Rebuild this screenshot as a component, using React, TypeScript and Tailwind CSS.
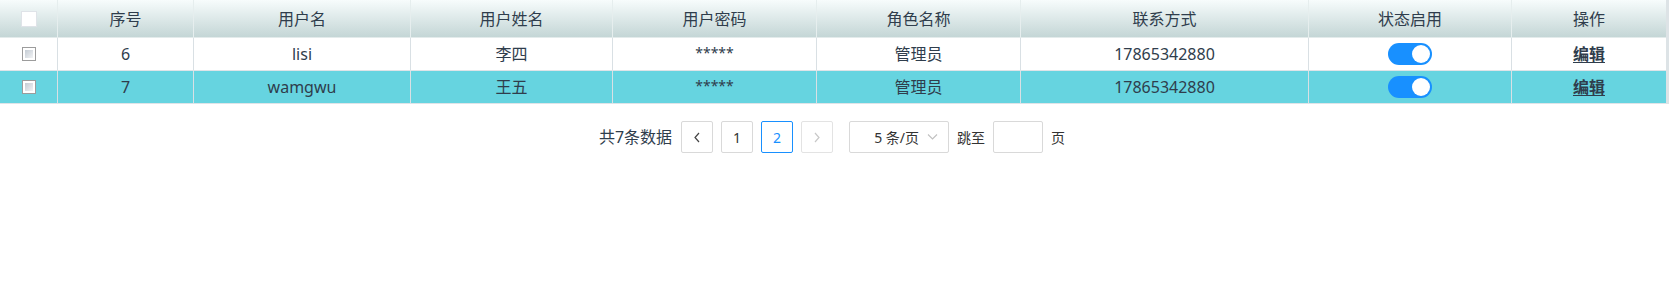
import React from 'react';

interface UserRow {
  id: number;
  username: string;
  name: string;
  password: string;
  role: string;
  phone: string;
  enabled: boolean;
}

const rows: UserRow[] = [
  { id: 6, username: 'lisi', name: '李四', password: '*****', role: '管理员', phone: '17865342880', enabled: true },
  { id: 7, username: 'wamgwu', name: '王五', password: '*****', role: '管理员', phone: '17865342880', enabled: true },
];

const headers = ['序号', '用户名', '用户姓名', '用户密码', '角色名称', '联系方式', '状态启用', '操作'];

const gridCols = 'grid grid-cols-[58px_136px_217px_202px_204px_204px_288px_203px_154px]';

function RowCheckbox() {
  return (
    <span className="block w-[14px] h-[14px] border border-[#9c9c9c] bg-white p-[2px]">
      <span className="block w-full h-full bg-gradient-to-br from-[#c4ccd4] to-[#f2f3f5]" />
    </span>
  );
}

function Toggle({ on }: { on: boolean }) {
  return (
    <span
      className={`flex items-center w-[44px] h-[22px] rounded-full px-[2px] ${
        on ? 'bg-[#1890ff] justify-end' : 'bg-[#c0c4cc] justify-start'
      }`}
    >
      <span className="block w-[18px] h-[18px] rounded-full bg-white" />
    </span>
  );
}

export default function App() {
  return (
    <div
      className="w-[1669px] h-[297px] bg-white text-[#2f3d4c]"
      style={{ fontFamily: '"Noto Sans", "Noto Sans CJK SC", sans-serif' }}
    >
      <div className="flex">
        <div className="w-[1666px]">
          {/* 表头 */}
          <div className={`${gridCols} h-[38px] bg-gradient-to-b from-[#f7fcfc] to-[#c4d6d6] border-b border-[#e3ebeb] text-[16px]`}>
            <div className="flex items-center justify-center border-r border-[#e6eeee]">
              <span className="block w-[16px] h-[16px] bg-white border border-[#dfe3e8]" />
            </div>
            {headers.map((h, i) => (
              <div
                key={h}
                className={`flex items-center justify-center ${i < headers.length - 1 ? 'border-r border-[#e6eeee]' : ''}`}
              >
                {h}
              </div>
            ))}
          </div>

          {/* 数据行 */}
          {rows.map((r, idx) => (
            <div
              key={r.id}
              className={`${gridCols} h-[33px] border-b border-[#dfe4e8] text-[16px] ${idx === 1 ? 'bg-[#66d4e0]' : 'bg-white'}`}
            >
              <div className="flex items-center justify-center border-r border-[#d9e0e4]">
                <RowCheckbox />
              </div>
              <div className="flex items-center justify-center border-r border-[#d9e0e4]">{r.id}</div>
              <div className="flex items-center justify-center border-r border-[#d9e0e4]">{r.username}</div>
              <div className="flex items-center justify-center border-r border-[#d9e0e4]">{r.name}</div>
              <div className="flex items-center justify-center border-r border-[#d9e0e4] text-[14px] pb-[3px]">{r.password}</div>
              <div className="flex items-center justify-center border-r border-[#d9e0e4]">{r.role}</div>
              <div className="flex items-center justify-center border-r border-[#d9e0e4]">{r.phone}</div>
              <div className="flex items-center justify-center border-r border-[#d9e0e4]">
                <Toggle on={r.enabled} />
              </div>
              <div className="flex items-center justify-center">
                <span className="underline font-semibold underline-offset-2">编辑</span>
              </div>
            </div>
          ))}
        </div>
        <div className="w-[3px] h-[104px] bg-[#dde3e6]" />
      </div>

      {/* 分页 */}
      <div className="flex items-center justify-center mt-[17px] pr-[5px] text-[14px] text-[#333]">
        <span className="text-[16px] text-[#2f3d4c] mr-[9px]">共7条数据</span>
        <div className="flex items-center gap-2">
          <button className="w-[32px] h-[32px] flex items-center justify-center border border-[#d9d9d9] rounded-[2px] bg-white">
            <svg width="10" height="12" viewBox="0 0 10 12" fill="none">
              <path d="M7 2 L3 6.5 L7 11" stroke="#444" strokeWidth="1.2" />
            </svg>
          </button>
          <button className="w-[32px] h-[32px] flex items-center justify-center border border-[#d9d9d9] rounded-[2px] bg-white text-[#333]">
            1
          </button>
          <button className="w-[32px] h-[32px] flex items-center justify-center border border-[#1890ff] rounded-[2px] bg-white text-[#1890ff]">
            2
          </button>
          <button className="w-[32px] h-[32px] flex items-center justify-center border border-[#e3e3e3] rounded-[2px] bg-white">
            <svg width="10" height="12" viewBox="0 0 10 12" fill="none">
              <path d="M3 2 L7 6.5 L3 11" stroke="#c8c8c8" strokeWidth="1.2" />
            </svg>
          </button>
        </div>
        <div className="ml-[16px] w-[100px] h-[32px] flex items-center justify-end pr-[10px] gap-[8px] border border-[#d9d9d9] rounded-[2px] bg-white">
          <span>5 条/页</span>
          <svg width="11" height="8" viewBox="0 0 11 8" fill="none">
            <path d="M1 1.5 L5.5 6 L10 1.5" stroke="#c0c0c0" strokeWidth="1.1" />
          </svg>
        </div>
        <span className="ml-[8px]">跳至</span>
        <div className="ml-[8px] w-[50px] h-[32px] border border-[#d9d9d9] rounded-[2px] bg-white" />
        <span className="ml-[8px]">页</span>
      </div>
    </div>
  );
}
